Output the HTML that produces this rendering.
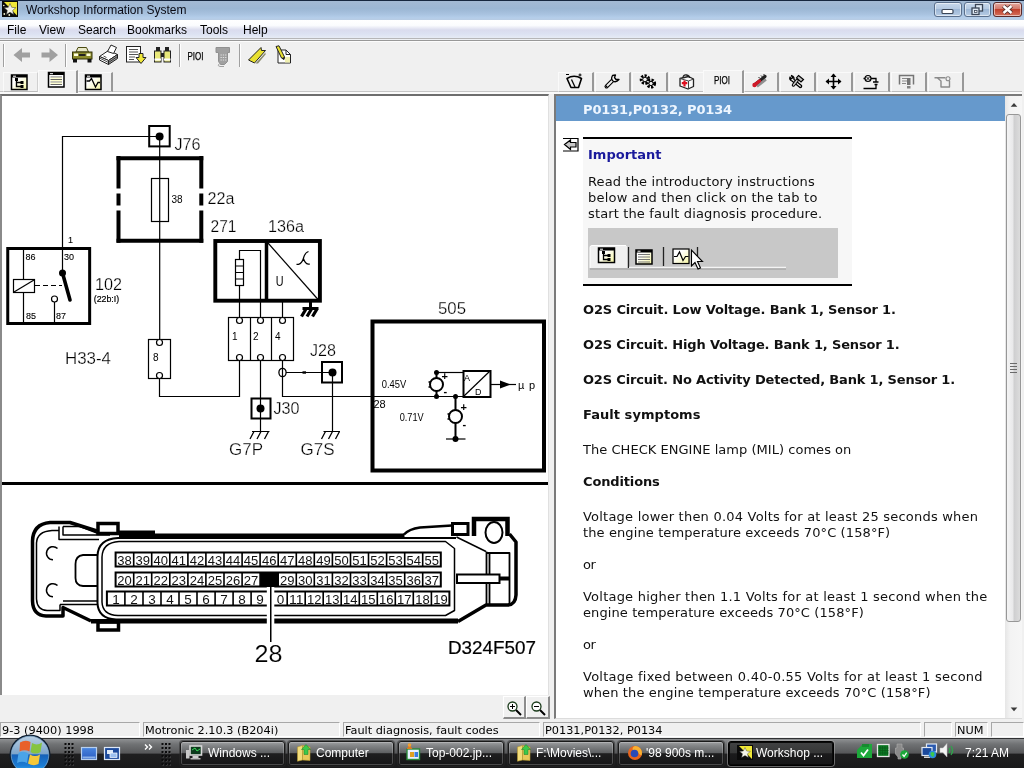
<!DOCTYPE html>
<html>
<head>
<meta charset="utf-8">
<title>Workshop Information System</title>
<style>
*{box-sizing:border-box;margin:0;padding:0}
html,body{width:1024px;height:768px;overflow:hidden}
body{position:relative;background:#f0f0f0;font-family:"Liberation Sans",sans-serif;font-size:12px;color:#000}
.abs{position:absolute}
#titlebar{left:0;top:0;width:1024px;height:20px;background:linear-gradient(#a3b9d3 0,#9bb6d3 40%,#a9c3e0 70%,#b5ceea 88%,#b8cce4 100%);border-top:1px solid #16263e}
#title{left:26px;top:3px;font-size:12px;color:#0a0a14;letter-spacing:0px;white-space:nowrap}
#menubar{left:0;top:20px;width:1024px;height:18px;background:linear-gradient(#ffffff 0,#fbfcfe 30%,#dadcee 55%,#dce2f2 78%,#e6ebf5 100%)}
#menubar span{position:absolute;top:3px;font-size:12px;white-space:nowrap}
#menusep{left:0;top:38px;width:1024px;height:4px;background:linear-gradient(#b6b6b8 0,#b6b6b8 25%,#eef0f4 25%,#eef0f4 50%,#989898 50%,#989898 75%,#fcfcfc 75%)}
.wbtn{top:2px;height:15px;border:1px solid #5a6f8c;border-radius:3px;background:linear-gradient(#c9d9ec 0,#b4c9e2 45%,#9db7d6 50%,#b7cce4 100%);box-shadow:inset 0 0 0 1px rgba(255,255,255,.55)}
#wclose{background:linear-gradient(#e6a99f 0,#d2786a 45%,#c1402c 50%,#d4705c 100%);border-color:#5a2a2a}

.tab{position:absolute;top:72px;height:20px;background:#f0f0f0;border-top:1px solid #fafafa;border-left:1px solid #fafafa;border-right:2px solid #989898;border-bottom:1px solid #bcbcbc}
.tab.sel{top:70px;height:23px;border-bottom:none;background:#f2f2f2}
#lpane{left:0;top:94px;width:549px;height:601px;background:#fff;border-top:2px solid #6e6e6e;border-left:2px solid #8a8a8a;border-right:1px solid #e0e0e0}
#rpaneborder{left:554px;top:94px;width:468px;height:625px;background:#fff;border-left:2px solid #7a7a7a;border-top:2px solid #7a7a7a;border-bottom:1px solid #dcdcdc}
#rhead{left:556px;top:96px;width:449px;height:25px;background:#6699cc}
#rhead span{position:absolute;left:27px;top:6px;font-family:"DejaVu Sans","Liberation Sans",sans-serif;font-weight:bold;font-size:13px;letter-spacing:-0.14px;color:#eef6ff;white-space:nowrap}
.rt{position:absolute;left:583px;font-family:"DejaVu Sans","Liberation Sans",sans-serif;font-size:13px;letter-spacing:0.24px;line-height:16px;color:#111;white-space:nowrap}
.rt b{font-weight:bold;letter-spacing:-0.135px}
#status{left:0;top:720px;width:1024px;height:18px;background:#f0f0f0}
.sf{position:absolute;top:722px;height:15px;border-top:1px solid #a8a8a8;border-left:1px solid #a8a8a8;border-right:1px solid #fff;border-bottom:1px solid #fff;font-size:11.300px;line-height:15px;padding-left:1px;white-space:nowrap;overflow:hidden;font-family:"DejaVu Sans","Liberation Sans",sans-serif}
#taskbar{left:0;top:738px;width:1024px;height:30px;background:linear-gradient(#8e9092 0,#707274 18%,#57585a 48%,#1f1f20 53%,#19191a 100%);border-top:1px solid #303133}
.tb{position:absolute;top:741px;height:25px;border:1px solid #1a1a1a;border-radius:3px;background:linear-gradient(#9ea0a2 0,#848688 15%,#5f6163 46%,#1e1e1f 51%,#161617 100%);box-shadow:inset 0 0 0 1px rgba(255,255,255,.22),0 0 0 1px rgba(40,40,40,.5);color:#fff;font-size:12px;line-height:23px;white-space:nowrap;overflow:hidden}
.tb span{position:absolute;left:27px;top:0}
.tb.act{background:linear-gradient(#414243 0,#363737 47%,#1b1b1c 51%,#151516 100%);border:1px solid #000;box-shadow:inset 0 0 0 1px #0a0a0a,0 0 0 1px rgba(170,170,170,.55)}
</style>
</head>
<body>
<div id="wrap" style="position:absolute;left:0;top:0;width:1024px;height:768px;will-change:transform">
<!-- TITLE BAR -->
<div id="titlebar" class="abs"></div>
<div id="title" class="abs">Workshop Information System</div>
<div class="abs wbtn" style="left:934px;width:28px"></div>
<div class="abs wbtn" style="left:964px;width:27px"></div>
<div class="abs wbtn" id="wclose" style="left:993px;width:29px"></div>
<svg class="abs" style="left:930px;top:0" width="94" height="20" viewBox="930 0 94 20">
<rect x="942" y="9.500" width="11" height="4" rx="1" fill="#fff" stroke="#3a4556" stroke-width="1.200"/>
<rect x="975.500" y="4.500" width="7" height="6.500" fill="#dfe9f5" stroke="#3a4556" stroke-width="1.300"/>
<rect x="972" y="8" width="7" height="6.500" fill="#dfe9f5" stroke="#3a4556" stroke-width="1.300"/>
<rect x="974.500" y="10.500" width="2.500" height="2" fill="#fff" stroke="#3a4556" stroke-width="0.800"/>
<path d="M1003.500 6 L1011.500 13 M1011.500 6 L1003.500 13" stroke="#4a2a2a" stroke-width="4.200" stroke-linecap="butt"/>
<path d="M1003.500 6 L1011.500 13 M1011.500 6 L1003.500 13" stroke="#fff" stroke-width="2.400" stroke-linecap="butt"/>
</svg>
<svg class="abs" style="left:2px;top:1px" width="16" height="16" viewBox="0 0 16 16">
<rect x="0" y="0" width="16" height="16" fill="#0a0a0a"/>
<path d="M2 1 H15 V14.500 Z" fill="#f0e838"/>
<path d="M8 2.500 L9.700 6.300 L13.800 6.700 L10.700 9.400 L11.700 13.500 L8 11.300 L4.400 13.500 L5.300 9.400 L2.200 6.700 L6.300 6.300 Z" fill="#f4f4e8" stroke="#333" stroke-width="0.500"/>
<circle cx="2.300" cy="13" r="0.900" fill="#f4f4d0"/><circle cx="7.300" cy="14" r="0.900" fill="#f4f4d0"/><circle cx="1.800" cy="4.500" r="0.800" fill="#f4f4d0"/>
</svg>
<!-- MENU BAR -->
<div id="menubar" class="abs">
<span style="left:7px">File</span><span style="left:39px">View</span><span style="left:78px">Search</span><span style="left:127px">Bookmarks</span><span style="left:200px">Tools</span><span style="left:243px">Help</span>
</div>
<div id="menusep" class="abs"></div>
<!--TOOLBAR-->
<div class="abs" style="left:3px;top:44px;width:2px;height:23px;border-left:1px solid #a0a0a0;border-right:1px solid #fff"></div>
<div class="abs" style="left:65px;top:44px;width:2px;height:23px;border-left:1px solid #a0a0a0;border-right:1px solid #fff"></div>
<div class="abs" style="left:179px;top:44px;width:2px;height:23px;border-left:1px solid #a0a0a0;border-right:1px solid #fff"></div>
<div class="abs" style="left:239px;top:44px;width:2px;height:23px;border-left:1px solid #a0a0a0;border-right:1px solid #fff"></div>
<svg class="abs" style="left:0;top:42px" width="300" height="28" viewBox="0 42 300 28">
<!-- back / forward -->
<path d="M13.5 55 L22 48 L22 52.5 L30 52.5 L30 57.5 L22 57.5 L22 62 Z" fill="#a0a0a0"/>
<path d="M58 55 L49.5 48 L49.5 52.5 L41.5 52.5 L41.5 57.5 L49.5 57.5 L49.5 62 Z" fill="#a0a0a0"/>
<!-- car -->
<path d="M76 52 L78 47.5 L86.5 47.5 L88.5 52 Z" fill="#e8e8c8" stroke="#4a4a10" stroke-width="1"/>
<rect x="72.5" y="52" width="19.5" height="7" fill="#8c8c2c" stroke="#33330a" stroke-width="1"/>
<rect x="74" y="53.5" width="4" height="2.5" fill="#ffffe0"/><rect x="86.5" y="53.5" width="4" height="2.5" fill="#ffffe0"/>
<rect x="79" y="54" width="6.5" height="2" fill="#222"/>
<rect x="73" y="59" width="4" height="3.5" fill="#111"/><rect x="87.5" y="59" width="4" height="3.5" fill="#111"/>
<!-- printer -->
<path d="M99.500 56.500 L108.500 50.500 L117.500 54.500 L108.500 60.500 Z" fill="#fff" stroke="#222" stroke-width="1"/>
<path d="M99.500 56.500 V60 L108.500 64.500 V60.500 Z" fill="#fff" stroke="#222" stroke-width="1"/>
<path d="M108.500 60.500 L117.500 54.500 V58.500 L108.500 64.500 Z" fill="#9a9a9a" stroke="#222" stroke-width="1"/>
<path d="M100 58.300 L108.500 62.500 L117.500 56.500" fill="none" stroke="#222" stroke-width="0.800"/>
<path d="M107.500 51.500 L111 45 L116.500 47.500 L113.500 53.500 Z" fill="#fff" stroke="#222" stroke-width="1"/>
<path d="M103.500 56 l3 1.500" stroke="#555" stroke-width="1"/>
<!-- doc + arrow -->
<rect x="126.5" y="46.5" width="14" height="15.5" fill="#fff" stroke="#222" stroke-width="1"/>
<path d="M129 49.5h9M129 52h9M129 54.500h9M129 57h6M129 59.500h5" stroke="#555" stroke-width="1"/>
<path d="M139 53.5 L143 53.5 L143 57.5 L146 57.5 L141 63.5 L136 57.5 L139 57.5 Z" fill="#f0e83a" stroke="#222" stroke-width="1"/>
<!-- binoculars -->
<rect x="154.500" y="51" width="6.5" height="11" fill="#e8e87a" stroke="#222" stroke-width="1"/>
<rect x="164" y="51" width="6.500" height="11" fill="#e8e87a" stroke="#222" stroke-width="1"/>
<rect x="156" y="47" width="4" height="4" fill="#222"/><rect x="165" y="47" width="4" height="4" fill="#222"/>
<rect x="161" y="53" width="3" height="4" fill="#222"/>
<rect x="154.500" y="58.500" width="6.500" height="2" fill="#fff"/><rect x="164" y="58.500" width="6.500" height="2" fill="#fff"/>
<!-- phone gray -->
<path d="M216 47.500 h13.500 v5 h-2 v9 l-3 3 h-4 l-2 -3 v-9 h-2.500 Z" fill="#a0a0a0" stroke="#909090" stroke-width="1"/>
<path d="M220.500 55h6M220.500 57.500h6M220.500 60h6" stroke="#e0e0e0" stroke-width="1" stroke-dasharray="1.3 1"/>
<path d="M219 64 q-2 2 1 2.500 h4" fill="none" stroke="#a0a0a0" stroke-width="1"/>
<!-- highlighter -->
<path d="M248.500 60 L261 47.500 L261.500 50.500 L265.500 50.500 L254.500 63 Z" fill="#e8e030" stroke="#222" stroke-width="1"/>
<path d="M255.500 63.500 L265.500 52.500 L265.500 54.500 L258 63.500 Z" fill="#8a8a6a"/>
<!-- doc + pencil -->
<path d="M278 50 L286 50 L290.500 54.500 L290.500 63 L278 63 Z" fill="#fff" stroke="#222" stroke-width="1"/>
<path d="M286 50 L286 54.500 L290.500 54.500" fill="none" stroke="#222" stroke-width="1"/>
<path d="M285 57 h5 v5.500 h-5 Z" fill="#f0f0b0"/>
<path d="M276 46.500 L279 45.800 L284.500 57 L284 59.500 L281.500 58 Z" fill="#e8e030" stroke="#222" stroke-width="1"/>
<path d="M281.500 58 L284 59.500 L284.500 57 Z" fill="#222"/>
<text x="187.500" y="59.500" font-family="Liberation Sans, sans-serif" font-size="11.500" textLength="16" lengthAdjust="spacingAndGlyphs" fill="#000" stroke="#000" stroke-width="0.250">PIOI</text>
</svg>
<!--TABS-->
<div class="abs" style="left:0;top:91px;width:1022px;height:3px;background:#fbfbfb;border-top:1px solid #c6c6c6"></div>
<div class="tab" style="left:3px;width:35px;border-right:1px solid #d0d0d0"></div>
<div class="tab sel" style="left:38px;width:40px"></div>
<div class="tab" style="left:78px;width:35px"></div>
<div class="tab" style="left:558px;width:36px"></div>
<div class="tab" style="left:595px;width:36px"></div>
<div class="tab" style="left:632px;width:36px"></div>
<div class="tab" style="left:669px;width:36px"></div>
<div class="tab sel" style="left:703px;width:41px"></div>
<div class="tab" style="left:744px;width:35px"></div>
<div class="tab" style="left:780px;width:36px"></div>
<div class="tab" style="left:817px;width:36px"></div>
<div class="tab" style="left:854px;width:36px"></div>
<div class="tab" style="left:891px;width:36px"></div>
<div class="tab" style="left:928px;width:36px"></div>
<div class="abs" style="left:713.500px;top:73.500px;font-size:11.500px;transform:scaleX(.7);transform-origin:0 0;white-space:nowrap;-webkit-text-stroke:0.250px #000">PIOI</div>
<!--TABICONS-->
<svg class="abs" style="left:0;top:70px" width="1024" height="24" viewBox="0 70 1024 24">
<defs><linearGradient id="yg" x1="0" y1="0" x2="1" y2="1"><stop offset="0.350" stop-color="#fff"/><stop offset="1" stop-color="#f6f6a0"/></linearGradient></defs>
<!-- left tab icons -->
<rect x="11.500" y="75" width="15.500" height="14.500" fill="url(#yg)" stroke="#000" stroke-width="1.500"/>
<rect x="11.500" y="75" width="15.500" height="2.500" fill="#000"/><rect x="13" y="75.700" width="3" height="1" fill="#fff"/>
<path d="M16.500 79 V86.500 H22 M16.500 82.500 H22" fill="none" stroke="#000" stroke-width="1.400"/>
<rect x="15" y="78" width="3" height="3" fill="#000"/><rect x="20.500" y="81" width="3" height="3" fill="#000"/><rect x="20.500" y="85" width="3" height="3" fill="#000"/>
<rect x="48.500" y="72.500" width="15.500" height="14.500" fill="#fff" stroke="#000" stroke-width="1.500"/>
<rect x="48.500" y="72.500" width="15.500" height="2.500" fill="#000"/><rect x="50" y="73.200" width="3" height="1" fill="#fff"/>
<path d="M50.500 77h11.500M50.500 79.500h11.500M50.500 82h11.500M50.500 84.500h11.500" stroke="#666" stroke-width="1"/>
<path d="M50.500 78.200h11.500M50.500 80.700h11.500M50.500 83.200h11.500" stroke="#ffffc0" stroke-width="1"/>
<rect x="85.500" y="75" width="15.500" height="14.500" fill="url(#yg)" stroke="#000" stroke-width="1.500"/>
<rect x="85.500" y="75" width="15.500" height="2.500" fill="#000"/><rect x="87" y="75.700" width="3" height="1" fill="#fff"/>
<path d="M86.500 81 H89.500 L91.500 78.500 L95.500 87 L98 82.500 H100" fill="none" stroke="#000" stroke-width="1.300"/>
<!-- r1 gauge -->
<path d="M567 78.500 Q574 74 581.500 78.500 L578.500 87.500 H571 Z" fill="#f0f0f0" stroke="#000" stroke-width="1.600" stroke-linejoin="round"/>
<path d="M571.500 79.500 L575 87" stroke="#000" stroke-width="1.300"/>
<path d="M566 74.500 h3 M578.500 75 h3 M580 73.500 v3" stroke="#000" stroke-width="1"/>
<!-- r2 wrench -->
<path d="M606.500 86.500 L613.500 79.500" stroke="#000" stroke-width="4" stroke-linecap="round"/>
<path d="M606.500 86.500 L613.500 79.500" stroke="#f0f0f0" stroke-width="1.800" stroke-linecap="round"/>
<path d="M612.500 75.500 Q610.500 79 613 81 Q616 83 619 79.500 L616 79.500 L614.500 77.500 L615.500 75 Z" fill="#f0f0f0" stroke="#000" stroke-width="1.300" stroke-linejoin="round"/>
<circle cx="606.500" cy="86.500" r="0.900" fill="#000"/>
<!-- r3 gears -->
<circle cx="645" cy="79.500" r="3.800" fill="#f0f0f0" stroke="#000" stroke-width="3" stroke-dasharray="2.100 1.300"/>
<circle cx="645" cy="79.500" r="2.300" fill="#f0f0f0" stroke="#000" stroke-width="1"/>
<circle cx="651" cy="83.500" r="3.600" fill="#f0f0f0" stroke="#000" stroke-width="3" stroke-dasharray="2.100 1.300"/>
<circle cx="651" cy="83.500" r="2.100" fill="#f0f0f0" stroke="#000" stroke-width="1"/>
<!-- r4 first aid -->
<path d="M680 78.500 L688.500 76.500 L693.500 79 V86.500 L688 89 L680 86 Z" fill="#fafafa" stroke="#222" stroke-width="1.300" stroke-linejoin="round"/>
<path d="M688.500 81 V89 M688.500 81 L693.500 79 M688.500 81 L680 78.500" fill="none" stroke="#444" stroke-width="1"/>
<path d="M683 78 Q683 74.500 686.500 75 Q689.500 75.500 689.500 78" fill="none" stroke="#222" stroke-width="1.300"/>
<path d="M684.500 80.500 v6 M681.800 83.200 h5.500" stroke="#e01020" stroke-width="2.200"/>
<!-- r6 thermometer -->
<path d="M757 86.500 L766 79.500" stroke="#909090" stroke-width="2.500"/>
<path d="M755 84.500 L765 76.500" stroke="#222" stroke-width="3.200" stroke-linecap="round"/>
<path d="M755 84.500 L759.500 81" stroke="#d01828" stroke-width="3.400" stroke-linecap="round"/>
<circle cx="754.500" cy="85" r="2.200" fill="#d01828"/>
<path d="M758.500 77 l1.500 1.500 M761 75.500 l1.500 1.500 M763.500 74 l1.500 1.500" stroke="#222" stroke-width="1"/>
<!-- r7 wrench+bolt -->
<path d="M790 77 Q789 80 792 81 L800 87.500 Q802 87.500 801.500 85.500 L794 79.500 Q794.500 76.500 791.500 75.500 L792.500 78 L791 79 Z" fill="#f0f0f0" stroke="#000" stroke-width="1.300" stroke-linejoin="round"/>
<path d="M798.500 75.500 L803.500 79.500 L801 82 L796.500 78 Z" fill="#c0c0c0" stroke="#000" stroke-width="1.200"/>
<path d="M797 80.500 L793.500 85" stroke="#000" stroke-width="3.500" stroke-linecap="round"/>
<path d="M797 80.500 L793.500 85" stroke="#c8c8c8" stroke-width="1.500" stroke-linecap="round"/>
<!-- r8 move -->
<path d="M826.500 81.500 H840.500 M833.500 74.500 V88.500" stroke="#000" stroke-width="1.600"/>
<path d="M833.500 73.500 l-3 3.500 h6 Z M833.500 89.500 l-3 -3.500 h6 Z M825.500 81.500 l3.500 -3 v6 Z M841.500 81.500 l-3.500 -3 v6 Z" fill="#000"/>
<!-- r9 circuit -->
<path d="M863.500 78.500 H865 M871 78.500 H876 V82 M876 84.500 V88.500 H863.500" fill="none" stroke="#000" stroke-width="1.300"/>
<path d="M873 82 H878.500 M874.500 84.500 H877.500" stroke="#000" stroke-width="1.400"/>
<circle cx="868" cy="78.500" r="3" fill="#f0f0f0" stroke="#000" stroke-width="1.200"/>
<path d="M866 76.500 l4 4 M870 76.500 l-4 4" stroke="#000" stroke-width="0.900"/>
<!-- r10 gray -->
<path d="M899.500 84.500 V75.500 H913.500 V84.500" fill="none" stroke="#757575" stroke-width="1.500"/>
<path d="M902 78.500 h5 M902 81 h5 M902 83.500 h4" stroke="#8a8a8a" stroke-width="1"/>
<rect x="907" y="78" width="3.500" height="7" fill="#757575"/><rect x="907" y="86" width="3.500" height="2.500" fill="#858585"/>
<!-- r11 gray oilcan -->
<path d="M934.500 77.800 H945.500 M937.500 78 L941 81 V87 H949.500 V81" fill="none" stroke="#8a8a8a" stroke-width="1.400" stroke-linejoin="round"/>
<circle cx="948" cy="78.800" r="2" fill="#f0f0f0" stroke="#8a8a8a" stroke-width="1.100"/>
</svg>
<!--LEFTPANE-->
<div id="lpane" class="abs"></div>
<div class="abs" style="left:2px;top:482px;width:546px;height:3px;background:#000"></div>
<!--CIRCUIT-->
<svg class="abs" style="left:2px;top:95px" width="546" height="387" viewBox="2 95 546 387" font-family="Liberation Sans, sans-serif" fill="#000">
<g fill="none" stroke="#000" stroke-width="1.200">
<!-- J76 wires -->
<path d="M160 136.500 H62.500 V247"/>
<path d="M159.700 137 V339"/>
<!-- relay inner -->
<path d="M23.500 249 V279 M23.500 292 V323 M54.500 302 V323 M62.500 249 V273"/>
<rect x="13.500" y="279.500" width="21" height="13"/>
<path d="M14 292 L34 280"/>
<path d="M35 285.500 H62" stroke-dasharray="5 3"/>
<circle cx="54.500" cy="299" r="3"/>
<!-- fuse -->
<rect x="151.500" y="178.500" width="17" height="43"/>

<!-- box 8 -->
<rect x="148.500" y="339.500" width="22" height="39" fill="#fff"/>
<circle cx="159.500" cy="342.500" r="3" fill="#fff"/><circle cx="159.500" cy="375.500" r="3" fill="#fff"/>
<path d="M159.500 378.500 V396.500 H239.500 V360"/>
<!-- heater loop -->
<path d="M239.500 317 V285.500 M239.500 259.500 V250.500 H260.500 V317"/>
<rect x="235.500" y="259.500" width="8" height="26"/>
<path d="M235.500 266h8M235.500 272.500h8M235.500 279h8"/>
<path d="M268 243 L318.500 300"/>
<path d="M282.500 302 V317"/>
<!-- connector 1 2 4 -->
<rect x="228.500" y="317.500" width="65" height="43" fill="#fff"/>
<path d="M250.500 317.500 V360.500 M271.500 317.500 V360.500"/>
<circle cx="239.500" cy="320.500" r="3" fill="#fff"/><circle cx="260.500" cy="320.500" r="3" fill="#fff"/><circle cx="282.500" cy="320.500" r="3" fill="#fff"/>
<circle cx="239.500" cy="357.500" r="3" fill="#fff"/><circle cx="260.500" cy="357.500" r="3" fill="#fff"/><circle cx="282.500" cy="357.500" r="3" fill="#fff"/>
<!-- wires below connector -->
<path d="M260.500 360.500 V431.500 M252 431.500 H269.500"/>
<path d="M254 431.500 l-4 7.500 M261 431.500 l-4 7.500 M268.500 431.500 l-4 7.500" stroke-width="1.300"/>
<path d="M282.500 360.500 V396.500 H463"/>
<ellipse cx="282.500" cy="372.500" rx="3.600" ry="4.200" fill="none" stroke-width="1.300"/>
<path d="M286 372.500 H332"/>
<path d="M332.500 372.500 V431.500 M323.500 431.500 H340"/>
<path d="M325.500 431.500 l-4 7.500 M332.500 431.500 l-4 7.500 M339.500 431.500 l-4 7.500" stroke-width="1.300"/>
<!-- ECU internals -->
<path d="M436.500 372.500 H463"/><path d="M436.500 372.500 V378 M436.500 391 V396.500" stroke-width="2"/>
<path d="M455.500 396.500 V410 M455.500 423 V439" stroke-width="2"/><path d="M446 439 H465.500"/>
<path d="M491 384.500 H516"/>
<path d="M464 396 L490 371"/>
</g>
<!-- voltage sources -->
<circle cx="436.500" cy="384.500" r="6.500" fill="#fff" stroke="#000" stroke-width="2"/>
<circle cx="455.500" cy="416.500" r="6.500" fill="#fff" stroke="#000" stroke-width="2"/>
<circle cx="436.500" cy="372.500" r="2.500"/><circle cx="436.500" cy="396.500" r="2.500"/><circle cx="455.500" cy="396.500" r="2.500"/><circle cx="455.500" cy="439" r="3"/>
<path d="M500 380.500 L511 384.500 L500 388.500 Z"/>
<path d="M428.500 382 h2 M428.500 387 h2 M447.500 414 h2 M447.500 419 h2" stroke="#000" stroke-width="1.300"/>
<rect x="302.500" y="371.300" width="3.500" height="2.400"/>
<!-- thick boxes -->
<g fill="none" stroke="#000">
<rect x="7.750" y="248.500" width="81.900" height="75" stroke-width="3"/>
<path d="M118.500 156 V188.500 M118.500 193.500 V205.500 M118.500 210.500 V242.700 M201.300 156 V188.500 M201.300 193.500 V205.500 M201.300 210.500 V242.700" stroke-width="4"/>
<path d="M116.500 158.300 H203.300 M116.500 240.700 H203.300" stroke-width="4"/>
<rect x="215.300" y="241" width="104.600" height="59.700" stroke-width="3.900"/>
<path d="M266.500 241 V301" stroke-width="3.500"/>
<rect x="372.500" y="321.500" width="171.500" height="149" stroke-width="4"/>
<rect x="149.200" y="126" width="20.500" height="20.400" stroke-width="2"/>
<rect x="251.500" y="398.500" width="19" height="20" stroke-width="2"/>
<rect x="322" y="362" width="20" height="20.500" stroke-width="2"/>
<rect x="463.500" y="371" width="27" height="26" stroke-width="2"/>
<path d="M62.500 273 L70 300" stroke-width="3.600" stroke-linecap="round"/>
<path d="M310.500 302 V308 M302.500 308.500 H318.500" stroke-width="3"/>
<path d="M306 309 l-4.500 7.500 M311.500 309 l-4.500 7.500 M317 309 l-4.500 7.500" stroke-width="3.200"/>
<path d="M296.500 264.300 h2 q3.500 -0.800 5 -6.300 q1.500 -5.500 5 -6.500 M303.300 258 q1.500 5.500 5 6.200 h1.500" stroke-width="1.200"/>
</g>
<circle cx="159.600" cy="136.400" r="4"/><circle cx="260.500" cy="408.500" r="4"/><circle cx="332.500" cy="372.500" r="4"/><circle cx="62.500" cy="273" r="3.500"/>
<!-- labels -->
<g font-size="16" fill="#000" stroke="#fff" stroke-width="0.250">
<text x="174.500" y="149.500" textLength="26" lengthAdjust="spacingAndGlyphs">J76</text>
<text x="207.500" y="204" textLength="27" lengthAdjust="spacingAndGlyphs">22a</text>
<text x="210.500" y="231.500" textLength="26" lengthAdjust="spacingAndGlyphs">271</text>
<text x="268" y="231.500" textLength="36" lengthAdjust="spacingAndGlyphs">136a</text>
<text x="95" y="290" textLength="27" lengthAdjust="spacingAndGlyphs">102</text>
<text x="65" y="364" textLength="46" lengthAdjust="spacingAndGlyphs">H33-4</text>
<text x="273.500" y="413.500" textLength="26" lengthAdjust="spacingAndGlyphs">J30</text>
<text x="310" y="355.500" textLength="26" lengthAdjust="spacingAndGlyphs">J28</text>
<text x="229" y="455" textLength="34" lengthAdjust="spacingAndGlyphs">G7P</text>
<text x="300.500" y="455" textLength="34" lengthAdjust="spacingAndGlyphs">G7S</text>
<text x="438" y="313.500" textLength="28" lengthAdjust="spacingAndGlyphs">505</text>
</g>
<g font-size="10">
<text x="171.500" y="203">38</text>
<g font-size="9" stroke="#000" stroke-width="0.100"><text x="68" y="243">1</text>
<text x="25.500" y="260">86</text>
<text x="64" y="260">30</text>
<text x="26" y="318.500">85</text>
<text x="56" y="318.500">87</text></g>
<text x="93.700" y="302" font-size="9" textLength="25.500" lengthAdjust="spacingAndGlyphs" stroke="#000" stroke-width="0.200">(22b:I)</text>
<text x="153" y="360.500">8</text>
<text x="232" y="340">1</text><text x="253" y="340">2</text><text x="275" y="340">4</text>
<text x="381.800" y="387.500" textLength="24.500" lengthAdjust="spacingAndGlyphs">0.45V</text>
<text x="399.700" y="420.500" textLength="24" lengthAdjust="spacingAndGlyphs">0.71V</text>
<text x="464" y="380.500" font-size="9">A</text><text x="475" y="394.500" font-size="9">D</text>
<text x="441.500" y="380" font-size="11" font-weight="bold">+</text><text x="443.500" y="395" font-size="11" font-weight="bold">-</text>
<text x="460.500" y="411" font-size="11" font-weight="bold">+</text><text x="462.500" y="428" font-size="11" font-weight="bold">-</text>
</g>
<text x="373.500" y="408" font-size="11">28</text>
<text x="275.800" y="285.800" font-size="14" textLength="7.800" lengthAdjust="spacingAndGlyphs">U</text>
<text x="518" y="388.500" font-size="11" textLength="17" lengthAdjust="spacing">&#181; p</text>
</svg>
<!--CONNECTOR-->
<svg class="abs" style="left:2px;top:486px" width="546" height="208" viewBox="2 486 546 208" font-family="Liberation Sans, sans-serif" font-size="13.500" fill="#111">
<g fill="none" stroke="#000" stroke-linejoin="round">
<!-- left housing outer -->
<path d="M97 531 L70 522.500 H50 Q33 524 32.500 541 V601 Q33 615.500 46 616 H63 V607.500 L91 621" stroke-width="3.500"/>
<!-- left housing inner -->
<path d="M59 530.500 H52 Q37 531.500 36.500 543 V599 Q37 610 47 610.500 H60 V604.500" stroke-width="1.500"/>
<path d="M59 526.500 V539.500 H99 M63 526.500 V535 H110 M63 526.500 H80 L97 533" stroke-width="1.500"/>
<path d="M60 604.500 H97.500 M63 601 H97.500" stroke-width="1.500"/>
<!-- U shape -->
<path d="M97 555 H83 Q75.500 556 75.500 564 V578 Q75.500 585.500 83 586 H97" stroke-width="1.800"/>
<!-- C arcs -->
<path d="M57.500 548.500 A6.500 6.500 0 1 0 53 559.700" stroke-width="1.500"/>
<path d="M57.500 585.500 A6.500 6.500 0 1 0 53 596.700" stroke-width="1.500"/>
<!-- main body outlines -->
<path d="M456 538 H118 Q98 539 97.500 556 V603 Q98 618.500 116 619.500 H458" stroke-width="2"/>
<path d="M445.500 541.500 H119 Q102.500 542.500 102 557 V602 Q102.500 615 118 615.500 H445.500 L454.500 610.500 V548.500 Z" stroke-width="1.500"/>
<!-- right housing -->
<path d="M404 534.500 Q409 529 420 527.500 L452 525.500" stroke-width="2.500"/>
<path d="M509.500 534 L516 542 V595 Q515.500 604.500 508 605 H486 L458 621.500" stroke-width="3.500"/>
<path d="M456.500 537 L486 551.500" stroke-width="1.500"/>
<path d="M486.500 551.500 V604.500 M489.500 553 V604.500 M486.500 553 H509.500 V604" stroke-width="1.800"/>
<path d="M499.500 578.500 H510" stroke-width="4"/>
<ellipse cx="494" cy="532.500" rx="8.500" ry="10.500" stroke-width="2" fill="#fff"/>
</g>
<!-- tabs -->
<rect x="98" y="523.500" width="20" height="10" fill="#fff" stroke="#000" stroke-width="3.500"/>
<rect x="98" y="622" width="20.500" height="8" fill="#fff" stroke="#000" stroke-width="3.500"/>
<rect x="452.500" y="523.500" width="15.500" height="11" fill="#fff" stroke="#000" stroke-width="3"/>
<path d="M474 536 V519 H507.500 V536" fill="none" stroke="#000" stroke-width="4.500"/>
<rect x="457" y="574.500" width="42.500" height="8.500" fill="#fff" stroke="#000" stroke-width="2"/>
<!-- thick bars -->
<rect x="119" y="530.500" width="36" height="7" fill="#000"/>
<rect x="155" y="533.500" width="249.500" height="4" fill="#000"/>
<rect x="91" y="619" width="367" height="4.500" fill="#000"/>
<rect x="115.6" y="552.5" width="325.2" height="14.0" fill="#fff" stroke="#000" stroke-width="2"/>
<path d="M133.7 552.5V566.5M151.7 552.5V566.5M169.8 552.5V566.5M187.9 552.5V566.5M205.9 552.5V566.5M224.0 552.5V566.5M242.1 552.5V566.5M260.1 552.5V566.5M278.2 552.5V566.5M296.3 552.5V566.5M314.3 552.5V566.5M332.4 552.5V566.5M350.5 552.5V566.5M368.5 552.5V566.5M386.6 552.5V566.5M404.7 552.5V566.5M422.7 552.5V566.5" stroke="#000" stroke-width="1.600" fill="none"/>
<text x="124.6" y="564.5" text-anchor="middle" textLength="14.500" lengthAdjust="spacingAndGlyphs">38</text>
<text x="142.7" y="564.5" text-anchor="middle" textLength="14.500" lengthAdjust="spacingAndGlyphs">39</text>
<text x="160.8" y="564.5" text-anchor="middle" textLength="14.500" lengthAdjust="spacingAndGlyphs">40</text>
<text x="178.8" y="564.5" text-anchor="middle" textLength="14.500" lengthAdjust="spacingAndGlyphs">41</text>
<text x="196.9" y="564.5" text-anchor="middle" textLength="14.500" lengthAdjust="spacingAndGlyphs">42</text>
<text x="215.0" y="564.5" text-anchor="middle" textLength="14.500" lengthAdjust="spacingAndGlyphs">43</text>
<text x="233.0" y="564.5" text-anchor="middle" textLength="14.500" lengthAdjust="spacingAndGlyphs">44</text>
<text x="251.1" y="564.5" text-anchor="middle" textLength="14.500" lengthAdjust="spacingAndGlyphs">45</text>
<text x="269.2" y="564.5" text-anchor="middle" textLength="14.500" lengthAdjust="spacingAndGlyphs">46</text>
<text x="287.2" y="564.5" text-anchor="middle" textLength="14.500" lengthAdjust="spacingAndGlyphs">47</text>
<text x="305.3" y="564.5" text-anchor="middle" textLength="14.500" lengthAdjust="spacingAndGlyphs">48</text>
<text x="323.4" y="564.5" text-anchor="middle" textLength="14.500" lengthAdjust="spacingAndGlyphs">49</text>
<text x="341.4" y="564.5" text-anchor="middle" textLength="14.500" lengthAdjust="spacingAndGlyphs">50</text>
<text x="359.5" y="564.5" text-anchor="middle" textLength="14.500" lengthAdjust="spacingAndGlyphs">51</text>
<text x="377.6" y="564.5" text-anchor="middle" textLength="14.500" lengthAdjust="spacingAndGlyphs">52</text>
<text x="395.6" y="564.5" text-anchor="middle" textLength="14.500" lengthAdjust="spacingAndGlyphs">53</text>
<text x="413.7" y="564.5" text-anchor="middle" textLength="14.500" lengthAdjust="spacingAndGlyphs">54</text>
<text x="431.8" y="564.5" text-anchor="middle" textLength="14.500" lengthAdjust="spacingAndGlyphs">55</text>
<rect x="115.6" y="572.5" width="325.2" height="14.0" fill="#fff" stroke="#000" stroke-width="2"/>
<path d="M133.7 572.5V586.5M151.7 572.5V586.5M169.8 572.5V586.5M187.9 572.5V586.5M205.9 572.5V586.5M224.0 572.5V586.5M242.1 572.5V586.5M260.1 572.5V586.5M278.2 572.5V586.5M296.3 572.5V586.5M314.3 572.5V586.5M332.4 572.5V586.5M350.5 572.5V586.5M368.5 572.5V586.5M386.6 572.5V586.5M404.7 572.5V586.5M422.7 572.5V586.5" stroke="#000" stroke-width="1.600" fill="none"/>
<text x="124.6" y="584.5" text-anchor="middle" textLength="14.500" lengthAdjust="spacingAndGlyphs">20</text>
<text x="142.7" y="584.5" text-anchor="middle" textLength="14.500" lengthAdjust="spacingAndGlyphs">21</text>
<text x="160.8" y="584.5" text-anchor="middle" textLength="14.500" lengthAdjust="spacingAndGlyphs">22</text>
<text x="178.8" y="584.5" text-anchor="middle" textLength="14.500" lengthAdjust="spacingAndGlyphs">23</text>
<text x="196.9" y="584.5" text-anchor="middle" textLength="14.500" lengthAdjust="spacingAndGlyphs">24</text>
<text x="215.0" y="584.5" text-anchor="middle" textLength="14.500" lengthAdjust="spacingAndGlyphs">25</text>
<text x="233.0" y="584.5" text-anchor="middle" textLength="14.500" lengthAdjust="spacingAndGlyphs">26</text>
<text x="251.1" y="584.5" text-anchor="middle" textLength="14.500" lengthAdjust="spacingAndGlyphs">27</text>
<rect x="260.1" y="572.5" width="18.1" height="14.0" fill="#000"/>
<text x="287.2" y="584.5" text-anchor="middle" textLength="14.500" lengthAdjust="spacingAndGlyphs">29</text>
<text x="305.3" y="584.5" text-anchor="middle" textLength="14.500" lengthAdjust="spacingAndGlyphs">30</text>
<text x="323.4" y="584.5" text-anchor="middle" textLength="14.500" lengthAdjust="spacingAndGlyphs">31</text>
<text x="341.4" y="584.5" text-anchor="middle" textLength="14.500" lengthAdjust="spacingAndGlyphs">32</text>
<text x="359.5" y="584.5" text-anchor="middle" textLength="14.500" lengthAdjust="spacingAndGlyphs">33</text>
<text x="377.6" y="584.5" text-anchor="middle" textLength="14.500" lengthAdjust="spacingAndGlyphs">34</text>
<text x="395.6" y="584.5" text-anchor="middle" textLength="14.500" lengthAdjust="spacingAndGlyphs">35</text>
<text x="413.7" y="584.5" text-anchor="middle" textLength="14.500" lengthAdjust="spacingAndGlyphs">36</text>
<text x="431.8" y="584.5" text-anchor="middle" textLength="14.500" lengthAdjust="spacingAndGlyphs">37</text>
<rect x="106.9" y="591.5" width="342.5" height="14.0" fill="#fff" stroke="#000" stroke-width="2"/>
<path d="M124.9 591.5V605.5M143.0 591.5V605.5M161.0 591.5V605.5M179.0 591.5V605.5M197.0 591.5V605.5M215.1 591.5V605.5M233.1 591.5V605.5M251.1 591.5V605.5M269.1 591.5V605.5M287.2 591.5V605.5M305.2 591.5V605.5M323.2 591.5V605.5M341.2 591.5V605.5M359.3 591.5V605.5M377.3 591.5V605.5M395.3 591.5V605.5M413.3 591.5V605.5M431.4 591.5V605.5" stroke="#000" stroke-width="1.600" fill="none"/>
<text x="115.9" y="603.5" text-anchor="middle">1</text>
<text x="133.9" y="603.5" text-anchor="middle">2</text>
<text x="152.0" y="603.5" text-anchor="middle">3</text>
<text x="170.0" y="603.5" text-anchor="middle">4</text>
<text x="188.0" y="603.5" text-anchor="middle">5</text>
<text x="206.0" y="603.5" text-anchor="middle">6</text>
<text x="224.1" y="603.5" text-anchor="middle">7</text>
<text x="242.1" y="603.5" text-anchor="middle">8</text>
<text x="260.1" y="603.5" text-anchor="middle">9</text>
<text x="280.6" y="603.5" text-anchor="middle">0</text>
<text x="296.2" y="603.5" text-anchor="middle" textLength="14.500" lengthAdjust="spacingAndGlyphs">11</text>
<text x="314.2" y="603.5" text-anchor="middle" textLength="14.500" lengthAdjust="spacingAndGlyphs">12</text>
<text x="332.2" y="603.5" text-anchor="middle" textLength="14.500" lengthAdjust="spacingAndGlyphs">13</text>
<text x="350.3" y="603.5" text-anchor="middle" textLength="14.500" lengthAdjust="spacingAndGlyphs">14</text>
<text x="368.3" y="603.5" text-anchor="middle" textLength="14.500" lengthAdjust="spacingAndGlyphs">15</text>
<text x="386.3" y="603.5" text-anchor="middle" textLength="14.500" lengthAdjust="spacingAndGlyphs">16</text>
<text x="404.3" y="603.5" text-anchor="middle" textLength="14.500" lengthAdjust="spacingAndGlyphs">17</text>
<text x="422.4" y="603.5" text-anchor="middle" textLength="14.500" lengthAdjust="spacingAndGlyphs">18</text>
<text x="440.4" y="603.5" text-anchor="middle" textLength="14.500" lengthAdjust="spacingAndGlyphs">19</text>
<rect x="266.800" y="587" width="7.500" height="38" fill="#fff"/>
<rect x="270" y="586" width="1.500" height="56" fill="#000"/>
<text x="254.500" y="662" font-size="24" textLength="28" lengthAdjust="spacingAndGlyphs" fill="#000" stroke="#fff" stroke-width="0.150">28</text>
<text x="448" y="654" font-size="19" textLength="88" lengthAdjust="spacingAndGlyphs" fill="#000" stroke="#000" stroke-width="0.200">D324F507</text>
</svg>
<div class="abs" style="left:503px;top:696px;width:23px;height:23px;background:#f0f0f0;border-top:1px solid #fff;border-left:1px solid #fff;border-right:2px solid #8c8c8c;border-bottom:2px solid #8c8c8c"></div>
<div class="abs" style="left:526px;top:696px;width:24px;height:23px;background:#f0f0f0;border-top:1px solid #fff;border-left:1px solid #fff;border-right:2px solid #8c8c8c;border-bottom:2px solid #8c8c8c"></div>
<svg class="abs" style="left:503px;top:696px" width="47" height="23" viewBox="503 696 47 23">
<circle cx="512.500" cy="706.500" r="4.500" fill="#fff" stroke="#1a3a1a" stroke-width="1.300"/><path d="M510 706.500h5M512.500 704v5" stroke="#000" stroke-width="1"/><path d="M516 710l5 5" stroke="#000" stroke-width="2"/>
<circle cx="536.500" cy="706.500" r="4.500" fill="#fff" stroke="#1a3a1a" stroke-width="1.300"/><path d="M534 706.500h5" stroke="#000" stroke-width="1"/><path d="M540 710l5 5" stroke="#000" stroke-width="2"/>
</svg>
<!--RIGHTPANE-->
<div id="rpaneborder" class="abs"></div>
<div id="rhead" class="abs"><span>P0131,P0132, P0134</span></div>
<!--SCROLLBAR-->
<div class="abs" style="left:1005px;top:96px;width:17px;height:622px;background:linear-gradient(90deg,#e6e6e6 0,#f3f3f3 30%,#f6f6f6 100%)"></div>
<div class="abs" style="left:1006px;top:114px;width:15px;height:508px;border:1px solid #979797;border-radius:3px;background:linear-gradient(90deg,#f4f4f4 0,#e9e9ea 45%,#cfcfd0 55%,#dcdcdc 100%)"></div>
<svg class="abs" style="left:1006px;top:96px" width="17" height="622" viewBox="1006 96 17 622">
<path d="M1010.700 106.800 L1014 103 L1017.300 106.800 Z" fill="#3a3a3a"/>
<path d="M1010.700 707.500 L1014 711.300 L1017.300 707.500 Z" fill="#3a3a3a"/>
<path d="M1010 363.500h7M1010 366.500h7M1010 369.500h7M1010 372.500h7" stroke="#6a6a6a" stroke-width="1"/>
</svg>
<!--IMPORTANT-->
<div class="abs" style="left:583px;top:137px;width:269px;height:149px;background:#f7f7f7;border-top:2px solid #000;border-bottom:2px solid #000"></div>
<div class="rt" style="left:588px;top:147px;letter-spacing:0.011px;color:#1a1a9c"><b style="letter-spacing:inherit">Important</b></div>
<div class="rt" style="left:588px;top:174px;letter-spacing:0.135px">Read the introductory instructions</div>
<div class="rt" style="left:588px;top:190px;letter-spacing:0.213px">below and then click on the tab to</div>
<div class="rt" style="left:588px;top:206px;letter-spacing:0.140px">start the fault diagnosis procedure.</div>
<div class="abs" style="left:588px;top:228px;width:250px;height:50px;background:#c8c8c8"></div>
<svg class="abs" style="left:556px;top:130px" width="300" height="160" viewBox="556 130 300 160">
<!-- back icon -->
<path d="M563 138.500 H578 V151 H563" fill="none" stroke="#000" stroke-width="1.200"/>
<path d="M564.500 144.500 L570.500 140 V142.500 H576 V147 H570.500 V149.500 Z" fill="#c8c8c8" stroke="#000" stroke-width="1.200"/>
<!-- mini tabs -->
<path d="M590 268 V247.500 Q590 245.500 592 245.500 H625.500 Q627.500 245.500 627.500 247.500 V268 Z" fill="#f0f0f0"/>
<path d="M590 268 V247.500 Q590 245.500 592 245.500 H626" fill="none" stroke="#fff" stroke-width="1"/>
<path d="M628.500 247 V268 M663.500 247 V266 M697.500 247 V256" stroke="#222" stroke-width="1.300"/>
<path d="M629 267.500 H786" stroke="#f4f4f4" stroke-width="1.500"/>
<path d="M590 269 H786" stroke="#9a9a9a" stroke-width="1"/>
<!-- icon1 tree -->
<rect x="598.500" y="248" width="16" height="14.500" fill="url(#yg)" stroke="#000" stroke-width="1.500"/>
<rect x="598.500" y="248" width="16" height="2.500" fill="#000"/><rect x="600" y="248.700" width="3" height="1" fill="#fff"/>
<path d="M603.500 252 V259.500 H609 M603.500 255.500 H609" fill="none" stroke="#000" stroke-width="1.300"/>
<rect x="602" y="251" width="3" height="3" fill="#000"/><rect x="607.500" y="254" width="3" height="3" fill="#000"/><rect x="607.500" y="258" width="3" height="3" fill="#000"/>
<!-- icon2 list -->
<rect x="636" y="250" width="16" height="14" fill="url(#yg)" stroke="#000" stroke-width="1.500"/>
<rect x="636" y="250" width="16" height="2.500" fill="#000"/><rect x="637.500" y="250.700" width="3" height="1" fill="#fff"/>
<path d="M638 254.500h12M638 257h12M638 259.500h12M638 262h12" stroke="#777" stroke-width="1"/>
<!-- icon3 wave -->
<rect x="673" y="249" width="16" height="14.500" fill="url(#yg)" stroke="#000" stroke-width="1.200"/>
<path d="M674 256.500 H677 L679.500 252 L683 260.500 L685.500 256.500 H688.500" fill="none" stroke="#000" stroke-width="1.200"/>
<!-- cursor -->
<path d="M691.500 250 V266 L695 262.500 L698 269 L700.500 268 L697.500 261.500 H702.500 Z" fill="#fff" stroke="#000" stroke-width="1.100" stroke-linejoin="miter"/>
</svg>
<div class="rt" style="top:302px;letter-spacing:-0.149px"><b style="letter-spacing:inherit">O2S Circuit. Low Voltage. Bank 1, Sensor 1.</b></div>
<div class="rt" style="top:337px;letter-spacing:-0.168px"><b style="letter-spacing:inherit">O2S Circuit. High Voltage. Bank 1, Sensor 1.</b></div>
<div class="rt" style="top:372px;letter-spacing:-0.177px"><b style="letter-spacing:inherit">O2S Circuit. No Activity Detected, Bank 1, Sensor 1.</b></div>
<div class="rt" style="top:407px;letter-spacing:0.047px"><b style="letter-spacing:inherit">Fault symptoms</b></div>
<div class="rt" style="top:442px;letter-spacing:0.036px">The CHECK ENGINE lamp (MIL) comes on</div>
<div class="rt" style="top:474px;letter-spacing:-0.139px"><b style="letter-spacing:inherit">Conditions</b></div>
<div class="rt" style="top:509px;letter-spacing:0.217px">Voltage lower then 0.04 Volts for at least 25 seconds when</div>
<div class="rt" style="top:525px;letter-spacing:0.111px">the engine temperature exceeds 70&deg;C (158&deg;F)</div>
<div class="rt" style="top:557px;letter-spacing:-0.456px">or</div>
<div class="rt" style="top:589px;letter-spacing:0.226px">Voltage higher then 1.1 Volts for at least 1 second when the</div>
<div class="rt" style="top:605px;letter-spacing:0.099px">engine temperature exceeds 70&deg;C (158&deg;F)</div>
<div class="rt" style="top:637px;letter-spacing:-0.456px">or</div>
<div class="rt" style="top:669px;letter-spacing:0.255px">Voltage fixed between 0.40-0.55 Volts for at least 1 second</div>
<div class="rt" style="top:685px;letter-spacing:0.122px">when the engine temperature exceeds 70&deg;C (158&deg;F)</div>
<!--STATUSBAR-->
<div class="sf" style="left:0;width:140px">9-3 (9400) 1998</div>
<div class="sf" style="left:143px;width:197px">Motronic 2.10.3 (B204i)</div>
<div class="sf" style="left:343px;width:197px">Fault diagnosis, fault codes</div>
<div class="sf" style="left:543px;width:378px">P0131,P0132, P0134</div>
<div class="sf" style="left:924px;width:28px"></div>
<div class="sf" style="left:955px;width:33px">NUM</div>
<div class="sf" style="left:991px;width:33px"></div>
<!--TASKBAR-->
<div id="taskbar" class="abs"></div>
<div class="tb" style="left:180px;width:105px"><span>Windows ...</span></div>
<div class="tb" style="left:288px;width:106px"><span>Computer</span></div>
<div class="tb" style="left:398px;width:106px"><span>Top-002.jp...</span></div>
<div class="tb" style="left:508px;width:106px"><span>F:\Movies\...</span></div>
<div class="tb" style="left:618px;width:106px"><span>'98 900s m...</span></div>
<div class="tb act" style="left:728px;width:106px"><span>Workshop ...</span></div>
<div class="abs" style="left:965px;top:746px;color:#fff;font-size:12px;white-space:nowrap">7:21 AM</div>
<!--TASKICONS-->
<svg class="abs" style="left:0;top:730px" width="1024" height="38" viewBox="0 730 1024 38">
<defs>
<radialGradient id="orb" cx="50%" cy="35%" r="65%"><stop offset="0" stop-color="#7fc4f2"/><stop offset="0.55" stop-color="#2a74c4"/><stop offset="1" stop-color="#0c2f6a"/></radialGradient>
<linearGradient id="orb2" x1="0" y1="0" x2="0" y2="1"><stop offset="0" stop-color="#b8cee2"/><stop offset="0.460" stop-color="#7ea6cc"/><stop offset="0.500" stop-color="#1762b8"/><stop offset="0.780" stop-color="#1b7cd4"/><stop offset="1" stop-color="#3abaf6"/></linearGradient>
<linearGradient id="ql1" x1="0" y1="0" x2="0" y2="1"><stop offset="0" stop-color="#4a86e0"/><stop offset="1" stop-color="#2a5cc0"/></linearGradient>
</defs>
<!-- start orb -->
<circle cx="30" cy="755" r="20.500" fill="#0b1a2c"/>
<circle cx="30" cy="755" r="18.800" fill="url(#orb2)" stroke="#8ab4d8" stroke-width="0.700"/>
<path d="M20 742.500 Q25 739.500 30.500 742 L29.500 751.500 Q24.500 749 19.500 751.500 Z" fill="#e8602a"/>
<path d="M32 743 Q37 746 42 742.500 L40.500 752 Q35.500 755 30.500 752 Z" fill="#86c440"/>
<path d="M18.500 753 Q23.500 750.500 28.500 753.500 L27 763 Q22 760.500 17 763 Z" fill="#4aa4e8"/>
<path d="M30 754.500 Q35 757.500 40 754.500 L38.500 764 Q33.500 766.500 28 763.500 Z" fill="#f4c83a"/>
<!-- grips -->
<g><path d="M65.5 744h1.500v1.500h-1.500zM69.0 744h1.500v1.500h-1.500zM72.5 744h1.500v1.500h-1.500zM65.5 748h1.500v1.500h-1.500zM69.0 748h1.500v1.500h-1.500zM72.5 748h1.500v1.500h-1.500zM65.5 752h1.500v1.500h-1.500zM69.0 752h1.500v1.500h-1.500zM72.5 752h1.500v1.500h-1.500zM65.5 756h1.500v1.500h-1.500zM69.0 756h1.500v1.500h-1.500zM72.5 756h1.500v1.500h-1.500zM65.5 760h1.500v1.500h-1.500zM69.0 760h1.500v1.500h-1.500zM72.5 760h1.500v1.500h-1.500zM65.5 764h1.500v1.500h-1.500zM69.0 764h1.500v1.500h-1.500zM72.5 764h1.500v1.500h-1.500zM162.5 744h1.500v1.500h-1.500zM166.0 744h1.500v1.500h-1.500zM169.5 744h1.500v1.500h-1.500zM162.5 748h1.500v1.500h-1.500zM166.0 748h1.500v1.500h-1.500zM169.5 748h1.500v1.500h-1.500zM162.5 752h1.500v1.500h-1.500zM166.0 752h1.500v1.500h-1.500zM169.5 752h1.500v1.500h-1.500zM162.5 756h1.500v1.500h-1.500zM166.0 756h1.500v1.500h-1.500zM169.5 756h1.500v1.500h-1.500zM162.5 760h1.500v1.500h-1.500zM166.0 760h1.500v1.500h-1.500zM169.5 760h1.500v1.500h-1.500zM162.5 764h1.500v1.500h-1.500zM166.0 764h1.500v1.500h-1.500zM169.5 764h1.500v1.500h-1.500z" fill="#8a8c8e" opacity="0.55"/><path d="M64.5 743h2v2h-2zM68.0 743h2v2h-2zM71.5 743h2v2h-2zM64.5 747h2v2h-2zM68.0 747h2v2h-2zM71.5 747h2v2h-2zM64.5 751h2v2h-2zM68.0 751h2v2h-2zM71.5 751h2v2h-2zM64.5 755h2v2h-2zM68.0 755h2v2h-2zM71.5 755h2v2h-2zM64.5 759h2v2h-2zM68.0 759h2v2h-2zM71.5 759h2v2h-2zM64.5 763h2v2h-2zM68.0 763h2v2h-2zM71.5 763h2v2h-2zM161.5 743h2v2h-2zM165.0 743h2v2h-2zM168.5 743h2v2h-2zM161.5 747h2v2h-2zM165.0 747h2v2h-2zM168.5 747h2v2h-2zM161.5 751h2v2h-2zM165.0 751h2v2h-2zM168.5 751h2v2h-2zM161.5 755h2v2h-2zM165.0 755h2v2h-2zM168.5 755h2v2h-2zM161.5 759h2v2h-2zM165.0 759h2v2h-2zM168.5 759h2v2h-2zM161.5 763h2v2h-2zM165.0 763h2v2h-2zM168.5 763h2v2h-2z" fill="#0c0c0d"/></g>
<!-- quick launch -->
<rect x="81.500" y="747.500" width="15" height="12" fill="url(#ql1)" stroke="#b8d0ee" stroke-width="1.200"/>
<rect x="82.500" y="756.500" width="13" height="2" fill="#8ab0e8"/>
<rect x="104.500" y="747.500" width="15" height="12" fill="#1c4a9c" stroke="#dce8f8" stroke-width="1.200"/>
<rect x="107" y="750" width="6" height="4" fill="#dce8f8"/><rect x="110" y="753" width="7" height="4.500" fill="#9cc0f0" stroke="#fff" stroke-width="0.700"/>
<path d="M145 744.500 l2.500 2.500 l-2.500 2.500 M149 744.500 l2.500 2.500 l-2.500 2.500" fill="none" stroke="#fff" stroke-width="1.400"/>
<!-- task icons -->
<rect x="190" y="746" width="11.500" height="9" fill="#0c3a1c" stroke="#d8d8d8" stroke-width="1.600"/>
<path d="M192 750 l3 -2 l2 3 l3 -2" stroke="#3ad85a" stroke-width="1" fill="none"/>
<rect x="186" y="750" width="3.500" height="8.500" fill="#c8c8c8"/><rect x="192.500" y="756" width="6" height="2" fill="#d0d0d0"/><rect x="190.500" y="758" width="10" height="1.500" fill="#b8b8b8"/>
<path d="M297.500 747 l5 -1.500 v14.500 l-5 1.200 Z" fill="#f2dc7a" stroke="#b89a30" stroke-width="0.600"/><path d="M302.500 745.500 l7.500 1.500 v13.500 l-7.500 -0.500 Z" fill="#e8c85a" stroke="#b89a30" stroke-width="0.600"/>
<path d="M306 744.500 l4.500 5 h-2.500 v5 h-4 v-5 h-2.500 Z" fill="#3cc84a" stroke="#1a7a2a" stroke-width="0.500"/>
<rect x="407" y="749" width="12.500" height="10.500" fill="#e8f0ff" stroke="#2a8a3a" stroke-width="1.400"/><rect x="410" y="752" width="4" height="5" fill="#e0a020"/><rect x="414.500" y="752" width="3.500" height="5" fill="#3a7ae0"/>
<path d="M406.500 749 l3 -4 l3 4 Z" fill="#e07a20"/><circle cx="409.500" cy="745" r="1.800" fill="#f0a030"/>
<path d="M517.500 747 l5 -1.500 v14.500 l-5 1.200 Z" fill="#f2dc7a" stroke="#b89a30" stroke-width="0.600"/><path d="M522.500 745.500 l7.500 1.500 v13.500 l-7.500 -0.500 Z" fill="#e8c85a" stroke="#b89a30" stroke-width="0.600"/>
<path d="M526 744.500 l4.500 5 h-2.500 v5 h-4 v-5 h-2.500 Z" fill="#3cc84a" stroke="#1a7a2a" stroke-width="0.500"/>
<circle cx="635" cy="753" r="7" fill="#e8641c"/><path d="M635 746 a7 7 0 0 1 6.500 9.500 q-3 -1 -4 -4 q-3 0 -5 -2 q0 -3 2.500 -3.500Z" fill="#f8b030"/><circle cx="634.500" cy="753.500" r="3.800" fill="#2a4ab8"/>
<rect x="737" y="745" width="16" height="15" fill="#0a0a0a"/><path d="M739 746 H752 V759 Z" fill="#f0e838"/>
<path d="M745 747.500 L746.600 751 L750.400 751.400 L747.500 753.800 L748.400 757.600 L745 755.600 L741.600 757.600 L742.500 753.800 L739.600 751.400 L743.400 751 Z" fill="#f4f4e8" stroke="#333" stroke-width="0.400"/>
<!-- tray -->
<path d="M857 750 l6 -6 h9 v14 h-15 Z" fill="#1ca83a"/><path d="M862 744 h7 v3 h-7z" fill="#178a30"/><path d="M861 752.500 l2.500 3 l4.500 -6" fill="none" stroke="#fff" stroke-width="1.800"/>
<rect x="877.500" y="744.500" width="11.500" height="12" fill="#0c7a24" stroke="#e8e8e8" stroke-width="1.300"/>
<path d="M880 746v9M882.500 746v9M885 746v9M887.500 746v9M878.500 748h10M878.500 750.500h10M878.500 753h10" stroke="#0a5a1a" stroke-width="0.700"/>
<path d="M897 744 h5 v4 h1.500 v6 l-2.500 3 v2 h-3 v-2 l-2.500 -3 v-6 h1.500 Z" fill="#8a8a8a" stroke="#b0b0b0" stroke-width="0.600"/>
<circle cx="904.500" cy="754.500" r="4.300" fill="#1ca83a"/><path d="M902.500 754.500 l1.600 2 l2.600 -3.800" fill="none" stroke="#fff" stroke-width="1.300"/>
<rect x="926.500" y="744" width="10" height="8" fill="#2a5ab0" stroke="#e0e8f4" stroke-width="1.200"/><rect x="922" y="747.500" width="10" height="8" fill="#1c4a9c" stroke="#e0e8f4" stroke-width="1.200"/>
<rect x="924" y="756.500" width="6" height="1.500" fill="#d8d8d8"/><circle cx="932.500" cy="754.500" r="3.800" fill="#2a8ae0"/><path d="M930.500 753 q2 -2 4 0 q0 3 -2 4 q-2.500 -1.500 -2 -4Z" fill="#3cc84a"/>
<path d="M940 748 h3 l4 -4.500 v13.500 l-4 -4.500 h-3 Z" fill="#f4f4f4" stroke="#c0c0c0" stroke-width="0.500"/>
<path d="M949 748 q1.800 2.500 0 5 M951 746 q3.200 4.500 0 9" fill="none" stroke="#2ca84a" stroke-width="1.200"/>
</svg>
</div>
</body>
</html>
